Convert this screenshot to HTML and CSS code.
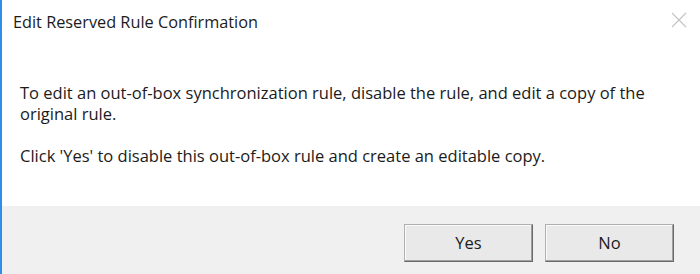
FILE: index.html
```html
<!DOCTYPE html>
<html>
<head>
<meta charset="utf-8">
<link rel="stylesheet" href="styles.css">
</head>
<body>
<div class="dialog">
  <div class="titlebar">
    <span class="title">Edit Reserved Rule Confirmation</span>
    <svg class="close" width="16" height="16" viewBox="0 0 16 16"><path d="M1 1 L15 15 M15 1 L1 15" stroke="#c4c4c4" stroke-width="1.2" fill="none"/></svg>
  </div>
  <div class="content">
    <p class="msg">To edit an out-of-box synchronization rule, disable the rule, and edit a copy of the original rule.</p>
    <p class="msg second">Click 'Yes' to disable this out-of-box rule and create an editable copy.</p>
  </div>
  <div class="footer">
    <button class="btn">Yes</button>
    <button class="btn">No</button>
  </div>
</div>
</body>
</html>
```
FILE: styles.css
```css
html, body {
  margin: 0;
  padding: 0;
  background: #fff;
}
.dialog {
  width: 698px;
  height: 274px;
  border-left: 2px solid #2f8fe6;
  display: flex;
  flex-direction: column;
  font-family: "Open Sans", "Noto Sans", sans-serif;
  color: #1b1b1b;
}
.titlebar {
  height: 60px;
  display: flex;
  align-items: flex-start;
  justify-content: space-between;
  padding: 11px 13px 0 11px;
  box-sizing: border-box;
}
.title {
  font-size: 16.3px;
  line-height: 22px;
}
.close {
  margin-top: 1px;
}
.content {
  flex: 1;
  padding: 22px 30px 0 18px;
}
.msg {
  margin: 0;
  font-size: 16.5px;
  line-height: 21px;
}
.second {
  margin-top: 21px;
}
.footer {
  height: 68px;
  background: #f0f0f0;
  display: flex;
  justify-content: flex-end;
  align-items: flex-start;
  gap: 12px;
  padding: 18px 26px 0 0;
  box-sizing: border-box;
}
.btn {
  width: 129px;
  height: 38px;
  background: #e9e9e9;
  border: 1px solid;
  border-color: #b0b0b0 #6a6a6a #6a6a6a #b0b0b0;
  box-shadow: inset -1px -1px 0 #a0a0a0, inset 1px 1px 0 #fafafa;
  font-family: "Open Sans", "Noto Sans", sans-serif;
  font-size: 16.5px;
  color: #1b1b1b;
  padding: 0 0 2px 0;
}
```
